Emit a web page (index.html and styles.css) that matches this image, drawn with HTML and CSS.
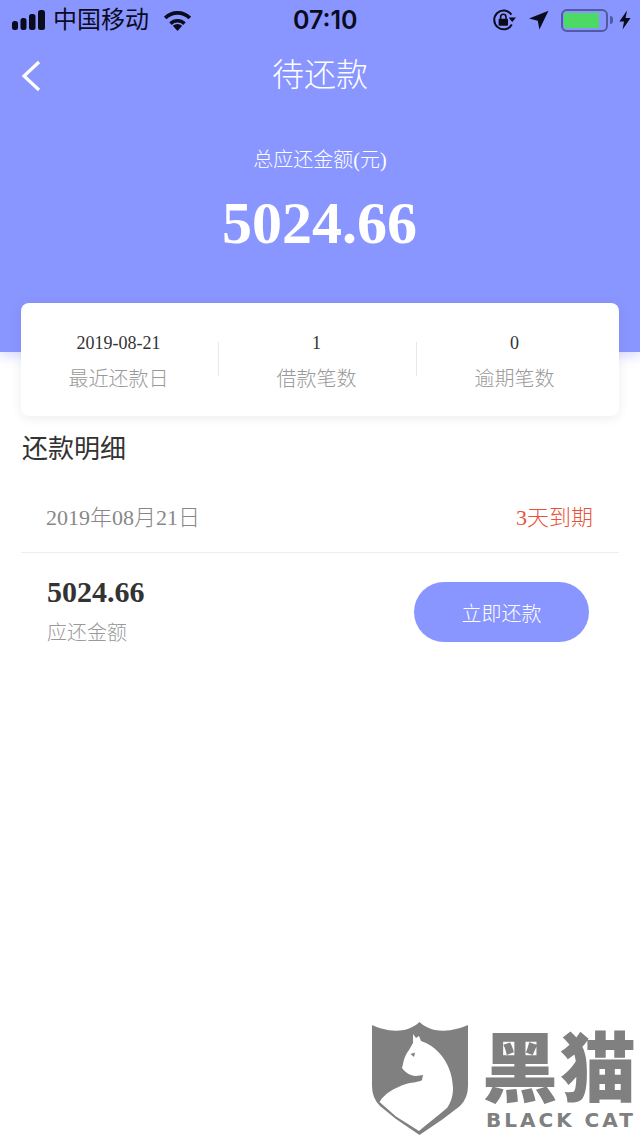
FILE: index.html
```html
<!DOCTYPE html>
<html lang="zh-CN">
<head>
    <meta charset="UTF-8">
    <meta name="viewport" content="width=device-width, initial-scale=1.0">
    <title>待还款</title>
    <link rel="stylesheet" href="styles.css">
</head>
<body>

    <div class="page">
        <header class="hero">
            <div class="status-bar">
                <div class="status-left">
                    <svg class="signal" width="33" height="20" viewBox="0 0 33 20">
                        <rect x="0" y="11" width="6" height="9" rx="2.5"/>
                        <rect x="8.5" y="8" width="6" height="12" rx="2.5"/>
                        <rect x="17" y="4" width="6.5" height="16" rx="2.5"/>
                        <rect x="26" y="0" width="7" height="20" rx="2.5"/>
                    </svg>
                    <span class="carrier">中国移动</span>
                    <svg class="wifi" width="29" height="21" viewBox="0 0 29 21">
                        <path d="M14.5 21 L9.8 15.8 A7 7 0 0 1 19.2 15.8 Z"/>
                        <path d="M7.5 13.6 A10 10 0 0 1 21.5 13.6" fill="none" stroke="#0b0b1e" stroke-width="3.6"/>
                        <path d="M2.2 8 A17.4 17.4 0 0 1 26.8 8" fill="none" stroke="#0b0b1e" stroke-width="3.8"/>
                    </svg>
                </div>
                <div class="status-time">07:10</div>
                <div class="status-right">
                    <svg class="rotation-lock" width="24" height="22" viewBox="0 0 24 22">
                        <path d="M18.4 5.6 A9.4 9.4 0 1 0 18.8 15.6" fill="none" stroke="#0b0b1e" stroke-width="2"/>
                        <path d="M15.6 8.6 L23 8.6 L19.3 13 Z"/>
                        <rect x="5.6" y="9.8" width="9.4" height="7" rx="1"/>
                        <path d="M7.6 10 V8 A2.7 2.7 0 0 1 13 8 V10" fill="none" stroke="#0b0b1e" stroke-width="1.6"/>
                    </svg>
                    <svg class="location" width="20" height="20" viewBox="0 0 20 20">
                        <path d="M19.5 0.8 L10.4 19.6 L8.8 10.8 L0 8.6 Z"/>
                    </svg>
                    <div class="battery">
                        <div class="battery-body"><div class="battery-fill"></div></div>
                        <div class="battery-cap"></div>
                    </div>
                    <svg class="bolt" width="12" height="20" viewBox="0 0 12 20">
                        <path d="M8 0.5 L0.4 11.4 L5 11.4 L3.6 19.5 L11.6 8 L6.6 8 Z"/>
                    </svg>
                </div>
            </div>

            <div class="nav-bar">
                <svg class="back" width="20" height="32" viewBox="0 0 20 32">
                    <path d="M18 2 L3 16 L18 30" fill="none" stroke="#fff" stroke-width="3.2"/>
                </svg>
                <h1 class="nav-title">待还款</h1>
            </div>

            <div class="total-label">总应还金额(元)</div>
            <div class="total-value">5024.66</div>
        </header>

        <section class="summary">
            <div class="summary-item">
                <div class="summary-value">2019-08-21</div>
                <div class="summary-label">最近还款日</div>
            </div>
            <div class="summary-item">
                <div class="summary-value">1</div>
                <div class="summary-label">借款笔数</div>
            </div>
            <div class="summary-item">
                <div class="summary-value">0</div>
                <div class="summary-label">逾期笔数</div>
            </div>
        </section>

        <h2 class="section-title">还款明细</h2>

        <section class="detail">
            <div class="detail-head">
                <span class="detail-date">2019年08月21日</span>
                <span class="detail-due">3天到期</span>
            </div>
            <div class="detail-body">
                <div>
                    <div class="detail-amount">5024.66</div>
                    <div class="detail-label">应还金额</div>
                </div>
                <button class="repay-button">立即还款</button>
            </div>
        </section>
    </div>

    <div class="watermark">
        <svg class="watermark-shield" width="96" height="114" viewBox="0 0 96 114">
            <path d="M0 3 C10 8 33 14 47.5 0 C62 14 85 8 96 3 V64 Q96 76 88 84 L71 97 L47.5 113 L24 97 L8 84 Q0 76 0 64 Z" fill="#808080"/>
            <path d="M41 12 L44 16 L47 14 L49 19 C62 23 80 38 81 66 C81 74 79 80 75 86 C66 94 56 101 47 109 L24 94.5 L7.5 80 C12 72 22 66 34 62 C42 60 48 60 50 58 L51 53 L44 54 C38 54 33 50 30 46 L31 42 C32 36 34 32 37 28 L41 21 Z" fill="#fff"/>
            <path d="M38.5 32 L43 30.5 L42 35 Z" fill="#808080"/>
        </svg>
        <div class="watermark-text">
            <div class="watermark-cn">黑猫</div>
            <div class="watermark-en">BLACK CAT</div>
        </div>
    </div>

</body>
</html>
```

FILE: styles.css
```css
* {
    box-sizing: border-box;
}

html, body {
    margin: 0;
    padding: 0;
}

body {
    width: 640px;
    height: 1136px;
    position: relative;
    overflow: hidden;
    background: #fff;
    font-family: "Liberation Serif", "Noto Sans CJK SC", serif;
}

.hero {
    height: 352px;
    background: #8a96ff;
    color: #fff;
    box-shadow: 0 5px 10px rgba(138, 150, 255, 0.3);
}

.status-bar {
    height: 40px;
    display: flex;
    align-items: center;
    padding: 0 9px 0 12px;
    color: #0b0b1e;
}

.status-bar svg {
    fill: #0b0b1e;
    display: block;
}

.status-left {
    display: flex;
    align-items: center;
}

.carrier {
    font-family: "Noto Sans CJK SC", sans-serif;
    font-size: 24px;
    line-height: 30px;
    margin: -4px 0 0 8px;
}

.wifi {
    margin-left: 14px;
}

.status-time {
    margin-left: 101px;
    font-family: "Inter", sans-serif;
    font-size: 25px;
    font-weight: 600;
}

.status-right {
    display: flex;
    align-items: center;
    margin-left: auto;
}

.location {
    margin-left: 12px;
}

.battery {
    display: flex;
    align-items: center;
    margin-left: 12px;
}

.battery-body {
    width: 47px;
    height: 23px;
    border: 2px solid #4f5a9f;
    border-radius: 6px;
    padding: 2px 1px;
}

.battery-fill {
    width: 35px;
    height: 100%;
    background: #4cd964;
}

.battery-cap {
    width: 3px;
    height: 8px;
    margin-left: 2px;
    background: #4f5a9f;
    border-radius: 0 3px 3px 0;
}

.bolt {
    margin-left: 6px;
}

.nav-bar {
    height: 66px;
    display: flex;
    align-items: center;
    justify-content: center;
    position: relative;
}

.back {
    position: absolute;
    left: 21px;
    top: 20px;
}

.nav-title {
    margin: -2px 0 0;
    font-family: "Noto Sans CJK SC", sans-serif;
    font-size: 32px;
    font-weight: 300;
}

.total-label {
    margin-top: 40px;
    text-align: center;
    font-size: 20px;
    line-height: 28px;
    font-weight: 300;
}

.total-value {
    margin-top: 14px;
    padding-right: 1px;
    text-align: center;
    font-size: 60px;
    line-height: 70px;
    font-weight: bold;
}

.summary {
    display: flex;
    width: 598px;
    height: 113px;
    margin: -49px auto 0;
    padding-top: 39px;
    position: relative;
    background: #fff;
    border-radius: 8px;
    box-shadow: 0 2px 12px rgba(0, 0, 0, 0.08);
}

.summary-item {
    flex: 0 0 198px;
    height: 34px;
    padding-right: 2px;
    text-align: center;
    border-left: 1px solid #e8e8e8;
}

.summary-item:first-child {
    flex-basis: 197px;
    border-left: none;
}

.summary-value {
    font-size: 18px;
    line-height: 2px;
    color: #333;
}

.summary-label {
    margin-top: 20px;
    font-size: 20px;
    line-height: 30px;
    font-weight: 300;
    color: #999;
}

.section-title {
    margin: 16px 0 0 22px;
    font-size: 26px;
    line-height: 36px;
    font-weight: normal;
    color: #333;
}

.detail {
    margin: 0 21px;
}

.detail-head {
    height: 85px;
    display: flex;
    align-items: center;
    justify-content: space-between;
    padding: 9px 26px 0 25px;
    border-bottom: 1px solid #eee;
    font-size: 22px;
    font-weight: 300;
}

.detail-date {
    color: #888;
}

.detail-due {
    color: #e8533a;
}

.detail-body {
    display: flex;
    align-items: flex-start;
    justify-content: space-between;
    padding: 21px 30px 0 26px;
}

.detail-amount {
    font-size: 30px;
    line-height: 36px;
    font-weight: bold;
    color: #333;
}

.detail-label {
    margin-top: 8px;
    font-size: 20px;
    line-height: 30px;
    font-weight: 300;
    color: #999;
}

.repay-button {
    width: 175px;
    height: 60px;
    margin-top: 8px;
    border: none;
    border-radius: 30px;
    background: #8a96ff;
    color: #fff;
    font-family: inherit;
    font-size: 20px;
    font-weight: 300;
}

.watermark {
    position: absolute;
    left: 372px;
    top: 1022px;
    display: flex;
    color: #808080;
}

.watermark-text {
    margin-left: 15px;
    padding-top: 3px;
}

.watermark-cn {
    margin-left: -1px;
    font-family: "Noto Sans CJK SC", sans-serif;
    font-size: 76px;
    line-height: 76px;
    font-weight: 900;
    letter-spacing: 2px;
    white-space: nowrap;
}

.watermark-en {
    margin: 7px 0 0 3px;
    font-family: "DejaVu Sans", sans-serif;
    font-size: 20px;
    line-height: 24px;
    font-weight: bold;
    letter-spacing: 3px;
    white-space: nowrap;
}
```
